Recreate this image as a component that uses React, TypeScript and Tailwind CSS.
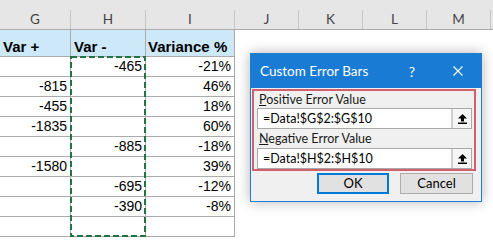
const cellFont = { fontFamily: '"Liberation Sans", Arial, sans-serif' };
const uiFont = { fontFamily: 'Lato, "Open Sans", sans-serif' };

const rows: [string, string, string][] = [
  ["", "-465", "-21%"],
  ["-815", "", "46%"],
  ["-455", "", "18%"],
  ["-1835", "", "60%"],
  ["", "-885", "-18%"],
  ["-1580", "", "39%"],
  ["", "-695", "-12%"],
  ["", "-390", "-8%"],
  ["", "", ""],
];

function UploadIcon() {
  return (
    <svg width="9" height="10" viewBox="0 0 9 10">
      <polygon points="4.5,0 9,4.5 6,4.5 6,7.5 3,7.5 3,4.5 0,4.5" fill="#000" />
      <rect x="0" y="8.5" width="9" height="1.5" fill="#000" />
    </svg>
  );
}

function RefInput({ value }: { value: string }) {
  return (
    <div className="flex h-[21px] border border-[#a9a9a9] bg-white">
      <div className="flex-1 pl-[5px] text-[12.5px] leading-[19px] text-black">{value}</div>
      <div className="flex w-[20px] items-center justify-center border-l-2 border-[#cfcfcf] bg-[#f6f6f6]">
        <UploadIcon />
      </div>
    </div>
  );
}

export default function App() {
  return (
    <div className="relative h-[244px] w-[493px] overflow-hidden bg-white">
      {/* column headers */}
      <div className="h-[30px] border-b border-[#ababab] bg-[#e6e6e6] pt-[10px]" style={uiFont}>
        <div className="flex h-[19px] text-[13.5px] leading-[19px] text-[#444]">
          <div className="w-[71px] border-r border-[#c6c6c6] text-center">G</div>
          <div className="w-[75px] border-r border-[#c6c6c6] text-center">H</div>
          <div className="w-[89px] border-r border-[#c6c6c6] text-center">I</div>
          <div className="w-[64px] border-r border-[#c6c6c6] text-center">J</div>
          <div className="w-[64px] border-r border-[#c6c6c6] text-center">K</div>
          <div className="w-[64px] border-r border-[#c6c6c6] text-center">L</div>
          <div className="w-[64px] border-r border-[#c6c6c6] text-center">M</div>
        </div>
      </div>

      {/* table */}
      <div className="flex w-[235px] flex-col text-black" style={cellFont}>
        <div className="flex h-[27px] bg-[#cce8f9] text-[15px] font-bold leading-[19px]">
          <div className="flex w-[71px] items-end border-r border-b border-[#ababab] pl-[3px]">Var +</div>
          <div className="flex w-[75px] items-end border-r border-b border-[#ababab] pl-[3px]">Var -</div>
          <div className="flex w-[89px] items-end border-r border-b border-[#ababab] pl-[2px]">Variance %</div>
        </div>
        {rows.map((r, i) => (
          <div key={i} className="flex h-[20px] text-[14px] leading-[19px]">
            <div className="w-[71px] border-r border-b border-[#ababab] pr-[3px] text-right">{r[0]}</div>
            <div className="w-[75px] border-r border-b border-[#ababab] pr-[3px] text-right">{r[1]}</div>
            <div className="w-[89px] border-r border-b border-[#ababab] pr-[3px] text-right">{r[2]}</div>
          </div>
        ))}
      </div>

      {/* copy marquee around H2:H10 */}
      <svg className="absolute left-[70px] top-[56px]" width="76" height="181">
        <rect x="1" y="1" width="74" height="179" fill="none" stroke="#217346" strokeWidth="2" strokeDasharray="6 3" />
      </svg>

      {/* dialog */}
      <div
        className="absolute left-[250px] top-[53px] flex h-[149px] w-[232px] flex-col border border-[#1b7fd5] bg-[#f0f0f0] shadow-[0_0_12px_rgba(0,0,0,0.3)]"
        style={uiFont}
      >
        <div className="flex h-[34px] items-center bg-[#1a7bd4] pl-[9px] text-[13.5px] text-white">
          <span className="flex-1">Custom Error Bars</span>
          <span className="mr-[38px] text-[14px]">?</span>
          <svg className="mr-[18px]" width="10" height="10" viewBox="0 0 10 10">
            <path d="M0.5 0.5 L9.5 9.5 M9.5 0.5 L0.5 9.5" stroke="#fff" strokeWidth="1.1" />
          </svg>
        </div>

        <div className="ml-[1px] mt-[1px] h-[82px] w-[224px] border-2 border-[#d0606c] pl-[3px] pr-[2px] text-[#1a1a1a]">
          <div className="h-[17px] pl-[2px] text-[12.5px] leading-[17px]">
            <span className="underline">P</span>ositive Error Value
          </div>
          <RefInput value="=Data!$G$2:$G$10" />
          <div className="h-[19px] pl-[2px] text-[12.5px] leading-[19px]">
            <span className="underline">N</span>egative Error Value
          </div>
          <RefInput value="=Data!$H$2:$H$10" />
        </div>

        <div className="mt-[2px] flex justify-end gap-[11px] pr-[8px] text-[13px] text-black">
          <div className="flex h-[21px] w-[72px] items-center justify-center border-2 border-[#0078d7] bg-[#e1e1e1]">OK</div>
          <div className="flex h-[21px] w-[73px] items-center justify-center border border-[#adadad] bg-[#e1e1e1]">Cancel</div>
        </div>
      </div>
    </div>
  );
}
